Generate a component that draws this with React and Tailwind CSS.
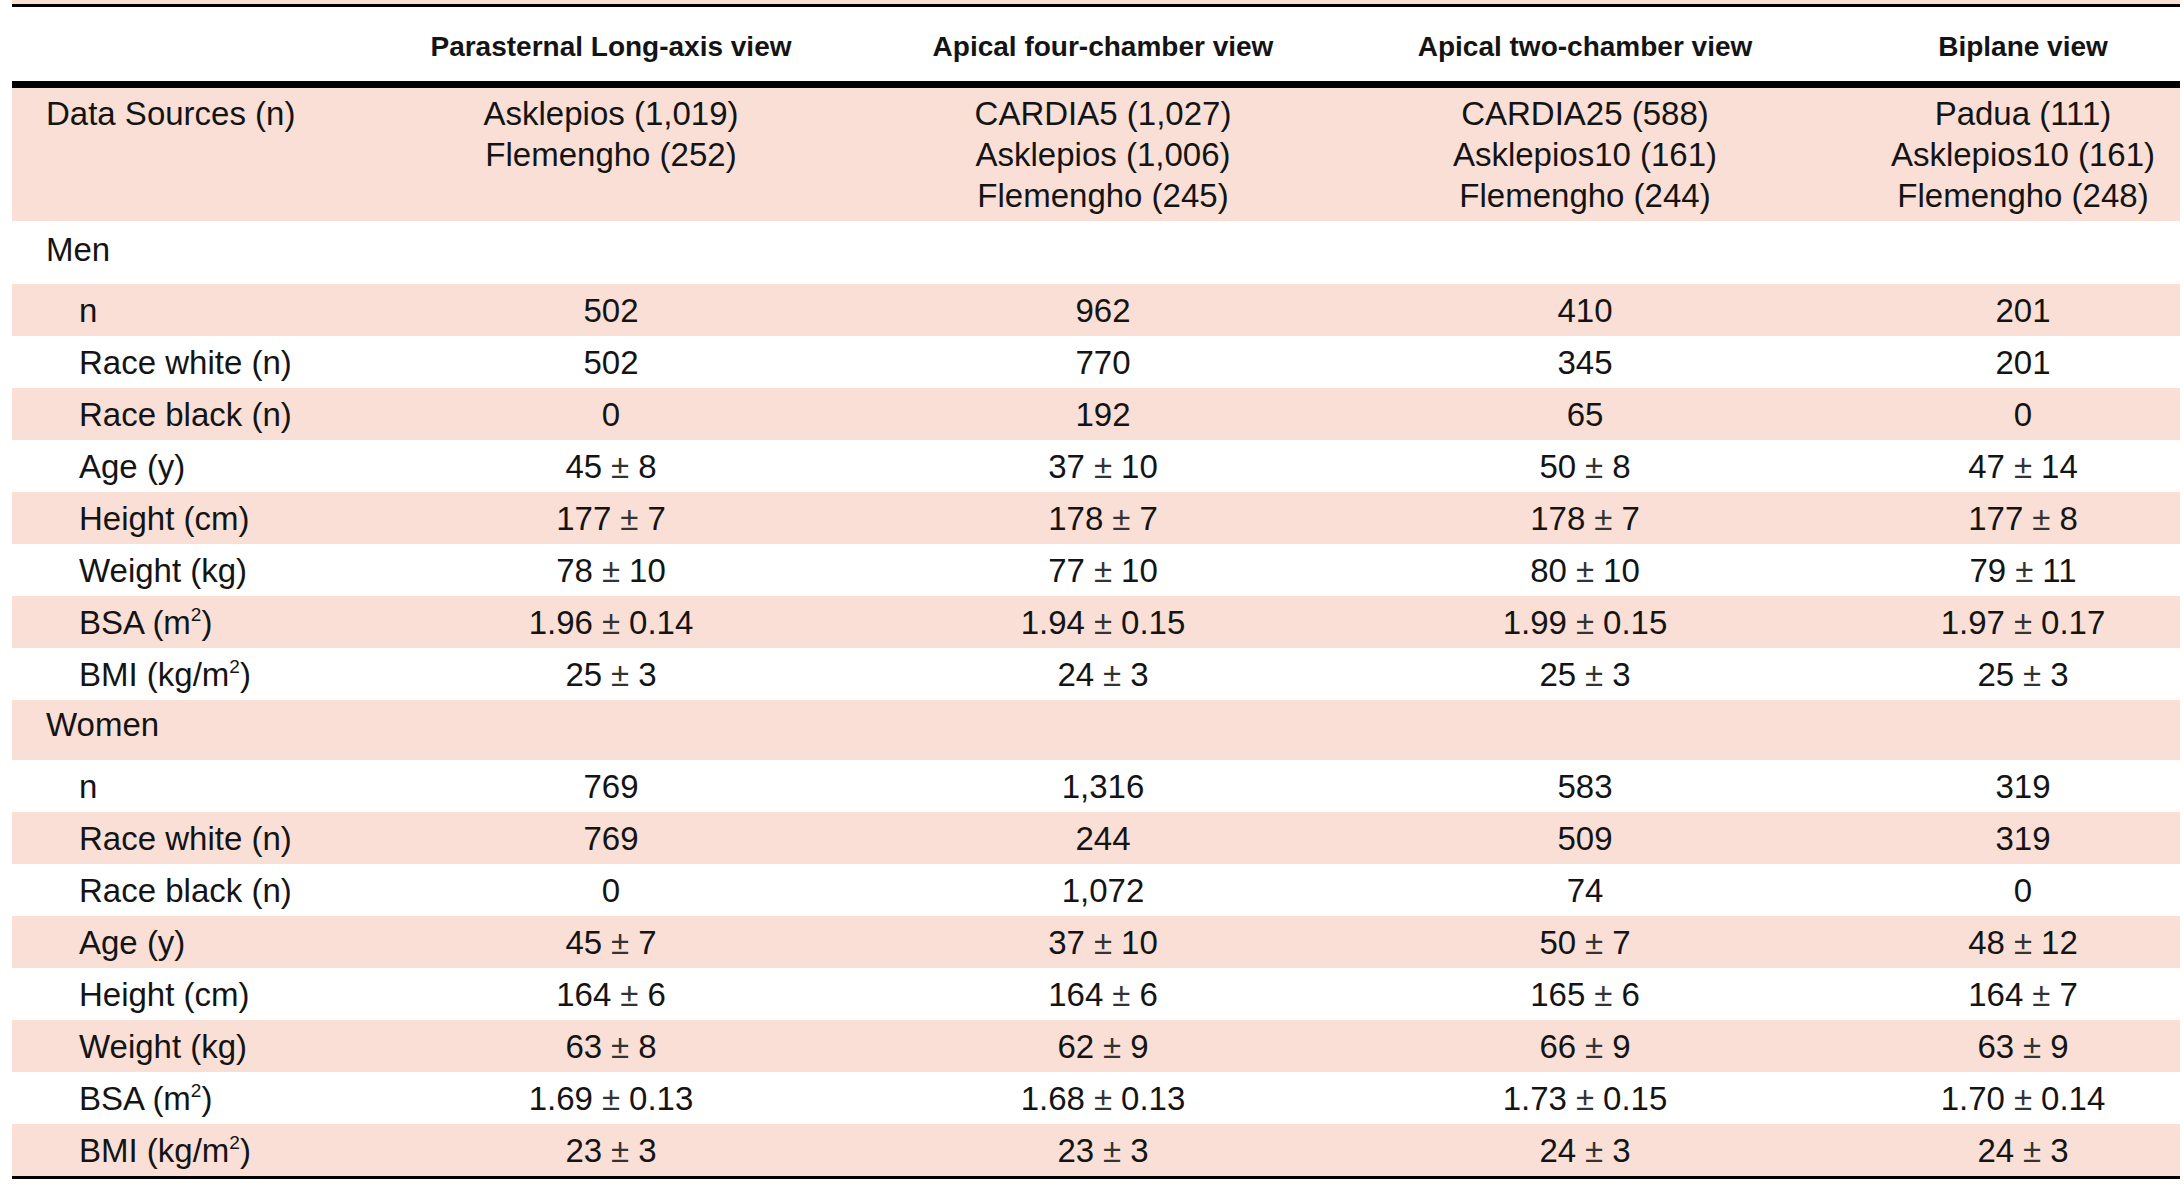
import React from 'react'

// Column widths of the table
const COLS = 'grid grid-cols-[308px_582px_402px_562px_314px]'

const header = ['Parasternal Long-axis view', 'Apical four-chamber view', 'Apical two-chamber view', 'Biplane view']

const sources = [
    ['Asklepios (1,019)', 'Flemengho (252)'],
    ['CARDIA5 (1,027)', 'Asklepios (1,006)', 'Flemengho (245)'],
    ['CARDIA25 (588)', 'Asklepios10 (161)', 'Flemengho (244)'],
    ['Padua (111)', 'Asklepios10 (161)', 'Flemengho (248)'],
]

const men = [
    ['n', ['502', '962', '410', '201']],
    ['Race white (n)', ['502', '770', '345', '201']],
    ['Race black (n)', ['0', '192', '65', '0']],
    ['Age (y)', ['45 ± 8', '37 ± 10', '50 ± 8', '47 ± 14']],
    ['Height (cm)', ['177 ± 7', '178 ± 7', '178 ± 7', '177 ± 8']],
    ['Weight (kg)', ['78 ± 10', '77 ± 10', '80 ± 10', '79 ± 11']],
    ['BSA', ['1.96 ± 0.14', '1.94 ± 0.15', '1.99 ± 0.15', '1.97 ± 0.17']],
    ['BMI', ['25 ± 3', '24 ± 3', '25 ± 3', '25 ± 3']],
]

const women = [
    ['n', ['769', '1,316', '583', '319']],
    ['Race white (n)', ['769', '244', '509', '319']],
    ['Race black (n)', ['0', '1,072', '74', '0']],
    ['Age (y)', ['45 ± 7', '37 ± 10', '50 ± 7', '48 ± 12']],
    ['Height (cm)', ['164 ± 6', '164 ± 6', '165 ± 6', '164 ± 7']],
    ['Weight (kg)', ['63 ± 8', '62 ± 9', '66 ± 9', '63 ± 9']],
    ['BSA', ['1.69 ± 0.13', '1.68 ± 0.13', '1.73 ± 0.15', '1.70 ± 0.14']],
    ['BMI', ['23 ± 3', '23 ± 3', '24 ± 3', '24 ± 3']],
]

const Sq = () => <sup className='text-[19px] -top-[13px]'>2</sup>

const Label = ({ name }) => {
    if (name === 'BSA') return <span>BSA (m<Sq />)</span>
    if (name === 'BMI') return <span>BMI (kg/m<Sq />)</span>
    return <span>{name}</span>
}

// "45 ± 8" -> spread the plus-minus a little, like the print table
const Value = ({ v }) => {
    const parts = v.split(' ± ')
    if (parts.length < 2) return <span>{v}</span>
    return <span>{parts[0]}<span className='px-[9px] text-[#333]'>±</span>{parts[1]}</span>
}

const DataRow = ({ name, values, pink }) => (
    <div className={`${COLS} h-[52px] items-center ${pink ? 'bg-[#f9dfd6]' : 'bg-white'}`}>
        <div className='pl-[67px] whitespace-nowrap'><Label name={name} /></div>
        {values.map((v, i) => (
            <div key={i} className='text-center whitespace-nowrap'><Value v={v} /></div>
        ))}
    </div>
)

const App = () => {
    return (
        <div className='w-[2184px] h-[1191px] bg-white pl-[12px] pr-[4px] text-[#141414] text-[33px] leading-[41px]' style={{ fontFamily: '"Liberation Sans", Arial, sans-serif' }}>
            <div className='h-[4px] bg-[#f9dfd6]' />
            <div className='border-t-[3px] border-b-[7px] border-black'>
                <div className={`${COLS} h-[74px] items-center pt-[4px] font-bold text-[28px]`}>
                    <div />
                    {header.map(h => (
                        <div key={h} className='text-center whitespace-nowrap'>{h}</div>
                    ))}
                </div>
            </div>

            <div className={`${COLS} h-[133px] pt-[5px] bg-[#f9dfd6]`}>
                <div className='pl-[34px] whitespace-nowrap'>Data Sources (n)</div>
                {sources.map((s, i) => (
                    <div key={i} className='flex flex-col items-center whitespace-nowrap'>
                        {s.map(line => <div key={line}>{line}</div>)}
                    </div>
                ))}
            </div>

            <div className='h-[63px] pt-[8px] pl-[34px]'>Men</div>
            {men.map(([name, values], i) => (
                <DataRow key={name} name={name} values={values} pink={i % 2 === 0} />
            ))}

            <div className='h-[60px] pt-[4px] pl-[34px] bg-[#f9dfd6]'>Women</div>
            {women.map(([name, values], i) => (
                <DataRow key={name} name={name} values={values} pink={i % 2 === 1} />
            ))}
            <div className='h-[3px] bg-black' />
        </div>
    )
}

export default App
